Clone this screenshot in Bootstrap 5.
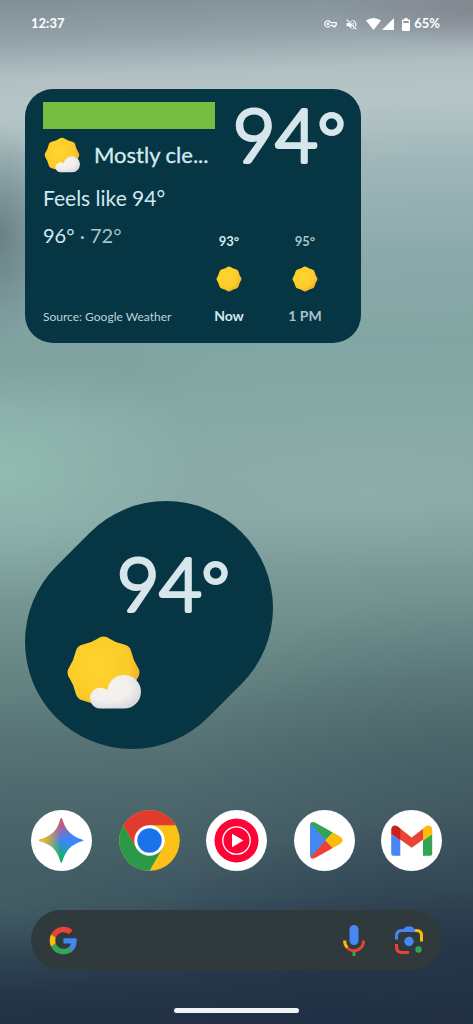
<!DOCTYPE html>
<html lang="en">
<head>
<meta charset="utf-8">
<meta name="viewport" content="width=device-width, initial-scale=1">
<title>Home screen</title>
<link href="https://cdn.jsdelivr.net/npm/bootstrap@5.3.0/dist/css/bootstrap.min.css" rel="stylesheet">
<style>
  body { font-family: Lato, "Open Sans", sans-serif; background: #1e2b3f; }
  .wallpaper {
    background:
      radial-gradient(60px 110px at 0 23%, rgba(78,98,104,.6), transparent),
      radial-gradient(150px 35px at 100% 1%, rgba(130,128,136,.7), transparent),
      radial-gradient(200px 130px at 0 46%, rgba(152,198,184,.6), transparent),
      radial-gradient(280px 80px at 78% 48%, rgba(152,180,180,.35), transparent),
      radial-gradient(300px 220px at 100% 79%, rgba(52,72,84,.4), transparent),
      radial-gradient(320px 130px at 100% 92%, rgba(32,45,66,.6), transparent),
      radial-gradient(200px 90px at 0 88%, rgba(70,102,106,.5), transparent),
      radial-gradient(220px 60px at 0 36%, rgba(112,146,144,.35), transparent),
      linear-gradient(178deg, #808e97, #93a2a9 4%, #b2c0c4 7.5%, #b6c5c7 11%, #9fb6b8 17%, #8ba9a9 26%, #82a6a3 34%, #87aaa6 42%, #87a8a5 50%, #789896 57%, #658583 65%, #567274 72%, #49636a 80%, #3c545f 87%, #2a3d4e 92%, #202e43 100%);
  }
  .status { height: 48px; padding: 0 33px 0 31px; font-size: 13px; font-weight: 700; }
  .widgets { padding: 41px 28px 0 25px; }
  .panel { width: 80%; min-width: 336px; min-height: 254px; padding: 13px 18px; border-radius: 28px; background: #063543; color: #d3e9f0; }
  .notice { height: 27px; background: #77bd43; }
  .headline { width: 172px; }
  .condition { height: 52px; gap: 14px; padding-left: 1px; font-size: 22px; line-height: 32px; -webkit-text-stroke: .3px; }
  .line-text { font-size: 21px; line-height: 34px; }
  .range { font-size: 20px; line-height: 34px; margin-top: 3px; }
  .low { color: #a9c3cb; }
  .source { font-size: 12px; line-height: 26px; color: #bdd3da; }
  .hours { margin-top: 49px; }
  .hour { width: 76px; font-size: 13px; font-weight: 700; line-height: 22px; }
  .hour + .hour { color: #a9c3cb; }
  .hour svg { margin: 14px auto; }
  .hour svg + div { font-size: 14px; line-height: 20px; }
  .temp { fill: #d6e6eb; stroke: #d6e6eb; stroke-width: 4px; stroke-linejoin: round; font-size: 73px; font-weight: 300; overflow: visible; }
  .temp tspan { font-size: 67px; }
  .blob { width: 248px; height: 248px; margin-top: 158px; }
  .blob-shape { inset: 0; }
  .blob-body { padding: 49px 42px 39px 41px; }
  .dock { padding: 0 31px; }
  .app { width: 61px; height: 61px; border-radius: 50%; background: #fff; }
  .search { height: 60px; margin: 39px 31px 0; padding: 0 17px; border-radius: 30px; background: #303a3c; }
  .search input { outline: 0; min-width: 0; color: #e4eaec; }
  .tools { gap: 23px; }
  .navarea { height: 54px; padding-bottom: 11px; }
  .handle { width: 125px; height: 5px; background: #f1f3f6; }
</style>
</head>
<body>
<svg width="0" height="0" class="position-absolute" aria-hidden="true">
  <defs>
    <radialGradient id="sunfill" cx=".4" cy=".4" r=".65"><stop offset="0" stop-color="#ffd52e"/><stop offset=".7" stop-color="#fccb29"/><stop offset="1" stop-color="#eda82c"/></radialGradient>
    <radialGradient id="cloudfill" cx=".35" cy=".35" r=".75"><stop offset="0" stop-color="#f6f3ee"/><stop offset=".6" stop-color="#f1efed"/><stop offset="1" stop-color="#d5d5da"/></radialGradient>
    <symbol id="sun" viewBox="-37 -37 74 74">
      <path fill="url(#sunfill)" d="M33.4-6Q37.6 0 33.4 6Q29.4 12.100 27.800 19.500Q26.600 26.600 19.500 27.800Q12.100 29.400 6 33.400Q0 37.600-6 33.400Q-12.100 29.400-19.500 27.800Q-26.600 26.600-27.800 19.500Q-29.400 12.100-33.400 6Q-37.600 0-33.400-6Q-29.400-12.100-27.800-19.500Q-26.600-26.600-19.500-27.800Q-12.100-29.400-6-33.400Q0-37.600 6-33.400Q12.100-29.400 19.500-27.800Q26.600-26.600 27.800-19.500Q29.400-12.100 33.400-6Z"/>
    </symbol>
    <symbol id="partly" viewBox="-37 -37 74 74">
      <use href="#sun" x="-37" y="-37" width="74" height="74"/>
      <path fill="url(#cloudfill)" d="M-3.5 35.6A10.3 10.3 0 1 1 3.8 17.6A16.6 16.6 0 1 1 20 35.6Z"/>
    </symbol>
  </defs>
</svg>

<main class="wallpaper min-vh-100 d-flex flex-column">
  <header class="status d-flex align-items-center justify-content-between text-white">
    <time>12:37</time>
    <div class="d-flex align-items-center">
      <svg class="me-2" width="13" height="8" viewBox="0 0 13 8" fill="none" stroke="#fff" stroke-width="1.1" aria-label="VPN"><path d="M6.600 2.600H12.300V5.200H11.200V6.600H9V5.200H6.600A3.100 3.100 0 1 1 6.600 2.600Z"/><circle cx="3.800" cy="3.900" r=".8"/></svg>
      <svg class="me-2" width="13" height="13" viewBox="0 0 24 24" fill="#fff" aria-label="Muted"><path d="M3 9v6h4l5 5v-6.500L7.500 9zM12 4L9.600 6.400 12 8.800zM14 8v2.800l2.400 2.400A4.500 4.500 0 0 0 14 8zM14 3.200v2.100a7 7 0 0 1 4.300 9.600l1.500 1.500A9 9 0 0 0 14 3.200zM14 18.700v2.100a9 9 0 0 0 3-1.400l-1.400-1.400z"/><path d="M3 3l18 18" stroke="#fff" stroke-width="2"/></svg>
      <svg width="15" height="12" viewBox="0 0 15 12" fill="#fff" aria-label="Wi-Fi"><path d="M0 2.500Q7.500-2.500 15 2.500L7.500 12Z"/></svg>
      <svg class="me-2" width="13" height="12" viewBox="0 0 13 12" fill="#fff" aria-label="Signal"><path d="M13 0V12H1Z"/></svg>
      <svg class="me-1" width="8" height="13" viewBox="0 0 8 13" aria-label="Battery"><path fill="#fff" d="M2.500 0h3v1.500H7q1 0 1 1V12q0 1-1 1H1q-1 0-1-1V2.500q0-1 1-1h1.500Z"/><path fill="#8c9ba2" d="M1.300 3h5.400v2H1.300z"/></svg>
      <span>65%</span>
    </div>
  </header>

  <div class="widgets">
    <section class="panel d-flex flex-column">
      <div class="d-flex justify-content-between">
        <div class="headline">
          <div class="notice"></div>
          <div class="condition d-flex align-items-center">
            <svg width="36" height="36" aria-hidden="true"><use href="#partly"/></svg>
            <span class="text-nowrap">Mostly cle...</span>
          </div>
        </div>
        <svg class="temp" width="110" height="79" role="img" aria-label="94 degrees"><text x="0" y="60">94<tspan>°</tspan></text></svg>
      </div>
      <div class="d-flex flex-grow-1 justify-content-between">
        <div class="d-flex flex-column text-nowrap">
          <span class="line-text">Feels like 94°</span>
          <span class="range">96° <span class="low">· 72°</span></span>
          <span class="source mt-auto">Source: Google Weather</span>
        </div>
        <div class="hours d-flex text-center">
          <div class="hour"><div>93°</div><svg class="d-block" width="26" height="26" aria-hidden="true"><use href="#sun"/></svg><div>Now</div></div>
          <div class="hour"><div>95°</div><svg class="d-block" width="26" height="26" aria-hidden="true"><use href="#sun"/></svg><div>1 PM</div></div>
        </div>
      </div>
    </section>

    <section class="blob position-relative">
      <svg class="blob-shape position-absolute w-100 h-100" viewBox="0 0 248 248" aria-hidden="true"><path d="M107 141L141 107" stroke="#063543" stroke-width="214" stroke-linecap="round"/></svg>
      <div class="blob-body position-relative h-100 d-flex flex-column justify-content-between">
        <svg class="temp align-self-end" width="114" height="70" role="img" aria-label="94 degrees"><text x="0" y="61">94<tspan>°</tspan></text></svg>
        <svg width="75" height="75" aria-hidden="true"><use href="#partly"/></svg>
      </div>
    </section>
  </div>

  <nav class="dock d-flex justify-content-between mt-auto" aria-label="Apps">
    <a class="app" href="#gemini" aria-label="Gemini">
      <svg width="61" height="61" viewBox="0 0 61 61">
        <defs>
          <linearGradient id="gr" x1=".4" y1="0" x2=".55" y2=".5"><stop offset=".1" stop-color="#ee4d5d"/><stop offset="1" stop-color="#ee4d5d" stop-opacity="0"/></linearGradient>
          <linearGradient id="gy" x1="0" y1=".5" x2=".48" y2=".5"><stop offset=".15" stop-color="#f4c20d"/><stop offset="1" stop-color="#f4c20d" stop-opacity="0"/></linearGradient>
          <linearGradient id="gg" x1=".4" y1="1" x2=".55" y2=".5"><stop offset=".15" stop-color="#12b55b"/><stop offset="1" stop-color="#12b55b" stop-opacity="0"/></linearGradient>
          <path id="spark" d="M30.300 8Q31 8 31.300 9.500C34.500 20 40.500 26.500 51 29.500Q52.500 29.900 52.500 30.400T51 31.300C40.500 34.500 34.500 40.500 31.300 51Q31 52.500 30.300 52.500T29.300 51C26.500 40.500 20.500 34.500 9.500 31.300Q8 31 8 30.400T9.500 29.500C20.500 26.500 26.500 20 29.300 9.500Q29.600 8 30.300 8Z"/>
        </defs>
        <use href="#spark" fill="#3c86fb"/><use href="#spark" fill="url(#gg)"/><use href="#spark" fill="url(#gr)"/><use href="#spark" fill="url(#gy)"/>
      </svg>
    </a>
    <a class="app bg-transparent" href="#chrome" aria-label="Chrome">
      <svg width="61" height="61" viewBox="-30.500 -30.500 61 61">
        <circle r="30.300" fill="#fbc116"/>
        <path fill="#2b9a48" d="M-26.200-15.200A30.300 30.300 0 0 0 0 30.300L13.200 7.600 0 0-13.200 7.600Z"/>
        <path fill="#e13b2f" d="M-26.200-15.200A30.300 30.300 0 0 1 26.200-15.200H0L-13.200 7.600Z"/>
        <circle r="15.200" fill="#fff"/><circle r="12.200" fill="#1a73e8"/>
      </svg>
    </a>
    <a class="app" href="#music" aria-label="YouTube Music">
      <svg width="61" height="61" viewBox="-30.500 -30.500 61 61"><circle r="22" fill="#ff0337"/><circle r="13.700" fill="none" stroke="#fff" stroke-width="1.300"/><path fill="#fff" d="M-4.500-6.800L7 0-4.500 6.800Z"/></svg>
    </a>
    <a class="app" href="#play" aria-label="Google Play">
      <svg width="61" height="61" viewBox="0 0 61 61">
        <defs><clipPath id="playclip"><path d="M16 15Q16.500 10.500 21 12.500L46 26.500Q51.500 30.300 46 34L21 48Q16.500 50 16 45.500Z"/></clipPath></defs>
        <g clip-path="url(#playclip)"><path fill="#4587f4" d="M14 8V52L32 30.300Z"/><path fill="#34a353" d="M14 10.300L31.500 30.300 39 22.500 20 8Z"/><path fill="#ea4335" d="M14 50.300L31.500 30.300 39 38 20 54Z"/><path fill="#fbbc04" d="M31.500 30.300L39.500 22 54 24V38L39.500 38.600Z"/></g>
      </svg>
    </a>
    <a class="app" href="#gmail" aria-label="Gmail">
      <svg width="61" height="61" viewBox="0 0 61 61">
        <path fill="#4587f4" d="M10.200 24L19.300 30.500V45.700H12.200Q10.200 45.700 10.200 43.700Z"/>
        <path fill="#34a353" d="M42 30.500L51.200 24V43.700Q51.200 45.700 49.200 45.700H42Z"/>
        <path fill="#ea4335" d="M18.500 18L30.700 27.500 43 18V29L30.700 37.800 18.500 29Z"/>
        <path fill="#c5221f" d="M10.200 20C10.200 15 15 13.700 19.300 18.500V30.600L10.200 24Z"/>
        <path fill="#fbbc04" d="M51.200 20C51.200 15 46.500 13.700 42 18.500V30.600L51.200 24Z"/>
      </svg>
    </a>
  </nav>

  <form class="search d-flex align-items-center">
    <svg class="flex-shrink-0" width="31" height="31" viewBox="0 0 54 54" aria-hidden="true"><g transform="translate(3 3)">
      <path fill="#ea4335" d="M24 9.500c3.540 0 6.710 1.220 9.210 3.600l6.850-6.850C35.900 2.380 30.470 0 24 0 14.620 0 6.510 5.380 2.560 13.220l7.980 6.190C12.430 13.720 17.740 9.500 24 9.500z"/>
      <path fill="#4285f4" d="M46.980 24.550c0-1.570-.15-3.090-.38-4.550H24v9.020h12.940c-.58 2.960-2.260 5.480-4.780 7.180l7.730 6c4.510-4.180 7.090-10.360 7.090-17.650z"/>
      <path fill="#fbbc05" d="M10.530 28.590c-.48-1.450-.76-2.990-.76-4.590s.27-3.140.76-4.590l-7.980-6.190C.92 16.460 0 20.120 0 24c0 3.880.92 7.540 2.560 10.780l7.970-6.190z"/>
      <path fill="#34a853" d="M24 48c6.480 0 11.930-2.130 15.890-5.810l-7.730-6c-2.150 1.450-4.920 2.300-8.160 2.300-6.260 0-11.570-4.220-13.470-9.910l-7.980 6.190C6.510 42.620 14.620 48 24 48z"/></g>
    </svg>
    <input class="flex-grow-1 bg-transparent border-0 mx-2" type="search" aria-label="Search">
    <div class="tools d-flex">
      <button class="btn p-0 border-0 lh-1" type="button" aria-label="Voice search">
        <svg width="32" height="32" viewBox="0 0 32 32" fill="none" stroke-width="3"><rect x="11.500" y="1" width="9" height="20" rx="4.500" fill="#4587f4"/><path stroke="#34a353" d="M16 26v6"/><path stroke="#ea4335" d="M8.200 22.500A9.500 9.500 0 0 0 25.500 16.500"/><path stroke="#fbbc04" d="M6.700 16.500A9.500 9.500 0 0 0 9.300 23.500"/></svg>
      </button>
      <button class="btn p-0 border-0 lh-1" type="button" aria-label="Search with Lens">
        <svg width="32" height="32" viewBox="0 0 32 32" fill="none" stroke-width="3"><path stroke="#fbbc04" d="M20 6.500H23.500Q28.500 6.500 28.500 11.500V17.500"/><path stroke="#4587f4" d="M3.500 15.500V12Q3.500 6.500 9 6.500H22"/><path fill="#4587f4" d="M9 7L12 3.500Q13 2.500 14 2.500H18Q19 2.500 20 3.500L23 7Z"/><path stroke="#ea4335" d="M3.500 20V23Q3.500 28.500 9 28.500H16"/><circle cx="16" cy="17.500" r="4.700" fill="#4587f4"/><circle cx="25.500" cy="25.500" r="3.200" fill="#34a353"/></svg>
      </button>
    </div>
  </form>

  <div class="navarea d-flex align-items-end justify-content-center"><div class="handle rounded-pill"></div></div>
</main>
<script src="https://cdn.jsdelivr.net/npm/bootstrap@5.3.0/dist/js/bootstrap.bundle.min.js"></script>
</body>
</html>
